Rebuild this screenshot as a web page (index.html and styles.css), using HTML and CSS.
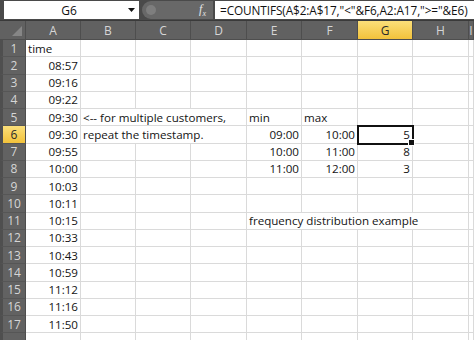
FILE: index.html
```html
<!DOCTYPE html>
<html lang="en">
<head>
  <meta charset="UTF-8" />
  <title>Frequency distribution</title>
  <link rel="stylesheet" href="styles.css">
</head>
<body>
  <div class="formula-bar">
    <div class="name-box">
      <span>G6</span>
      <svg class="drop" width="7" height="4" viewBox="0 0 7 4"><path d="M0 0h7L3.5 4z" fill="#111"/></svg>
    </div>
    <div class="fx-pill">
      <span class="knob"></span>
      <span class="fx">f<sub>x</sub></span>
    </div>
    <div class="formula">=COUNTIFS(A$2:A$17,"&lt;"&amp;F6,A2:A17,"&gt;="&amp;E6)</div>
  </div>

  <div class="sheet">
    <!-- column headers -->
    <div class="corner"><span class="tri"></span></div>
    <div class="col-head">A</div>
    <div class="col-head">B</div>
    <div class="col-head">C</div>
    <div class="col-head">D</div>
    <div class="col-head">E</div>
    <div class="col-head">F</div>
    <div class="col-head active">G</div>
    <div class="col-head">H</div>
    <div class="col-head">I</div>

    <div class="row-head">1</div>
    <div class="cell">time</div><div class="cell"></div><div class="cell"></div><div class="cell"></div><div class="cell"></div><div class="cell"></div><div class="cell"></div><div class="cell"></div><div class="cell"></div>

    <div class="row-head">2</div>
    <div class="cell num">08:57</div><div class="cell"></div><div class="cell"></div><div class="cell"></div><div class="cell"></div><div class="cell"></div><div class="cell"></div><div class="cell"></div><div class="cell"></div>

    <div class="row-head">3</div>
    <div class="cell num">09:16</div><div class="cell"></div><div class="cell"></div><div class="cell"></div><div class="cell"></div><div class="cell"></div><div class="cell"></div><div class="cell"></div><div class="cell"></div>

    <div class="row-head">4</div>
    <div class="cell num">09:22</div><div class="cell"></div><div class="cell"></div><div class="cell"></div><div class="cell"></div><div class="cell"></div><div class="cell"></div><div class="cell"></div><div class="cell"></div>

    <div class="row-head">5</div>
    <div class="cell num">09:30</div><div class="cell span3">&lt;-- for multiple customers,</div><div class="cell">min</div><div class="cell">max</div><div class="cell"></div><div class="cell"></div><div class="cell"></div>

    <div class="row-head active">6</div>
    <div class="cell num">09:30</div><div class="cell span3">repeat the timestamp.</div><div class="cell num">09:00</div><div class="cell num">10:00</div><div class="cell num selected">5<span class="handle"></span></div><div class="cell"></div><div class="cell"></div>

    <div class="row-head">7</div>
    <div class="cell num">09:55</div><div class="cell"></div><div class="cell"></div><div class="cell"></div><div class="cell num">10:00</div><div class="cell num">11:00</div><div class="cell num">8</div><div class="cell"></div><div class="cell"></div>

    <div class="row-head">8</div>
    <div class="cell num">10:00</div><div class="cell"></div><div class="cell"></div><div class="cell"></div><div class="cell num">11:00</div><div class="cell num">12:00</div><div class="cell num">3</div><div class="cell"></div><div class="cell"></div>

    <div class="row-head">9</div>
    <div class="cell num">10:03</div><div class="cell"></div><div class="cell"></div><div class="cell"></div><div class="cell"></div><div class="cell"></div><div class="cell"></div><div class="cell"></div><div class="cell"></div>

    <div class="row-head">10</div>
    <div class="cell num">10:11</div><div class="cell"></div><div class="cell"></div><div class="cell"></div><div class="cell"></div><div class="cell"></div><div class="cell"></div><div class="cell"></div><div class="cell"></div>

    <div class="row-head">11</div>
    <div class="cell num">10:15</div><div class="cell"></div><div class="cell"></div><div class="cell"></div><div class="cell span4">frequency distribution example</div><div class="cell"></div>

    <div class="row-head">12</div>
    <div class="cell num">10:33</div><div class="cell"></div><div class="cell"></div><div class="cell"></div><div class="cell"></div><div class="cell"></div><div class="cell"></div><div class="cell"></div><div class="cell"></div>

    <div class="row-head">13</div>
    <div class="cell num">10:43</div><div class="cell"></div><div class="cell"></div><div class="cell"></div><div class="cell"></div><div class="cell"></div><div class="cell"></div><div class="cell"></div><div class="cell"></div>

    <div class="row-head">14</div>
    <div class="cell num">10:59</div><div class="cell"></div><div class="cell"></div><div class="cell"></div><div class="cell"></div><div class="cell"></div><div class="cell"></div><div class="cell"></div><div class="cell"></div>

    <div class="row-head">15</div>
    <div class="cell num">11:12</div><div class="cell"></div><div class="cell"></div><div class="cell"></div><div class="cell"></div><div class="cell"></div><div class="cell"></div><div class="cell"></div><div class="cell"></div>

    <div class="row-head">16</div>
    <div class="cell num">11:16</div><div class="cell"></div><div class="cell"></div><div class="cell"></div><div class="cell"></div><div class="cell"></div><div class="cell"></div><div class="cell"></div><div class="cell"></div>

    <div class="row-head">17</div>
    <div class="cell num">11:50</div><div class="cell"></div><div class="cell"></div><div class="cell"></div><div class="cell"></div><div class="cell"></div><div class="cell"></div><div class="cell"></div><div class="cell"></div>

    <div class="row-head"></div>
    <div class="cell"></div><div class="cell"></div><div class="cell"></div><div class="cell"></div><div class="cell"></div><div class="cell"></div><div class="cell"></div><div class="cell"></div><div class="cell"></div>
  </div>
</body>
</html>
```

FILE: styles.css
```css
body {
  margin: 0;
  padding: 0;
  background: #ffffff;
  font-family: 'Open Sans', 'Liberation Sans', sans-serif;
  overflow: hidden;
}
.formula-bar {
  display: flex;
  align-items: center;
  height: 21px;
  background: #4a4a4a;
  border-bottom: 1px solid #3a3a3a;
  box-sizing: border-box;
}
.name-box {
  display: flex;
  align-items: center;
  margin-left: 4px;
  width: 135px;
  height: 18px;
  background: #ffffff;
  font-size: 12px;
  color: #111;
}
.name-box span {
  flex: 1;
  text-align: center;
  padding-left: 6px;
}
.drop {
  margin-right: 4px;
}
.fx-pill {
  display: flex;
  align-items: center;
  margin-left: 3px;
  width: 71px;
  height: 18px;
  background: #686868;
  border-radius: 10px 0 0 10px;
}
.knob {
  width: 10px;
  height: 10px;
  margin-left: 4px;
  border-radius: 50%;
  background: #7e7e7e;
}
.fx {
  margin-left: auto;
  margin-right: 7px;
  font-family: 'Liberation Serif', serif;
  font-style: italic;
  font-size: 12px;
  color: #e6e6e6;
}
.fx sub {
  font-size: 8px;
}
.formula {
  flex: 1;
  height: 18px;
  margin-left: 2px;
  padding-left: 5px;
  background: #ffffff;
  font-size: 11.8px;
  letter-spacing: -0.1px;
  line-height: 18px;
  color: #111;
  white-space: nowrap;
  overflow: hidden;
}
.sheet {
  display: grid;
  grid-template-columns: 26px 55px 55px 55px 56px 55px 56px 55px 56px 1fr;
  grid-template-rows: 19px repeat(18, 17.25px);
  font-size: 11.6px;
  color: #141414;
}
.corner,
.col-head {
  background: #616161;
  border-right: 1px solid #4e4e4e;
  border-bottom: 1px solid #4e4e4e;
  box-sizing: border-box;
}
.corner {
  position: relative;
}
.tri {
  position: absolute;
  right: 3px;
  bottom: 3px;
  width: 0;
  height: 0;
  border-left: 10px solid transparent;
  border-bottom: 10px solid #868686;
}
.col-head {
  display: flex;
  align-items: center;
  justify-content: center;
  color: #d6d6d6;
  font-size: 12px;
}
.col-head.active {
  background: linear-gradient(#fbdf7a, #f2c23b);
  color: #2a2a2a;
}
.row-head {
  display: flex;
  align-items: center;
  justify-content: center;
  background: #626262;
  border-left: 3px solid #4f4f4f;
  border-right: 1px solid #4e4e4e;
  border-bottom: 1px solid #565656;
  box-sizing: border-box;
  color: #d6d6d6;
  font-size: 12px;
}
.row-head.active {
  background: linear-gradient(#fbdf7a, #f2c23b);
  color: #2a2a2a;
}
.cell {
  display: flex;
  align-items: center;
  padding: 0 2px;
  border-right: 1px solid #dadada;
  border-bottom: 1px solid #dadada;
  box-sizing: border-box;
  white-space: nowrap;
  overflow: visible;
}
.cell.num {
  justify-content: flex-end;
}
.span3 {
  grid-column: span 3;
}
.span4 {
  grid-column: span 4;
}
.selected {
  position: relative;
  outline: 2px solid #111;
  outline-offset: -1px;
}
.handle {
  position: absolute;
  right: -3px;
  bottom: -3px;
  width: 5px;
  height: 5px;
  background: #111;
  border: 1px solid #fff;
}
```
